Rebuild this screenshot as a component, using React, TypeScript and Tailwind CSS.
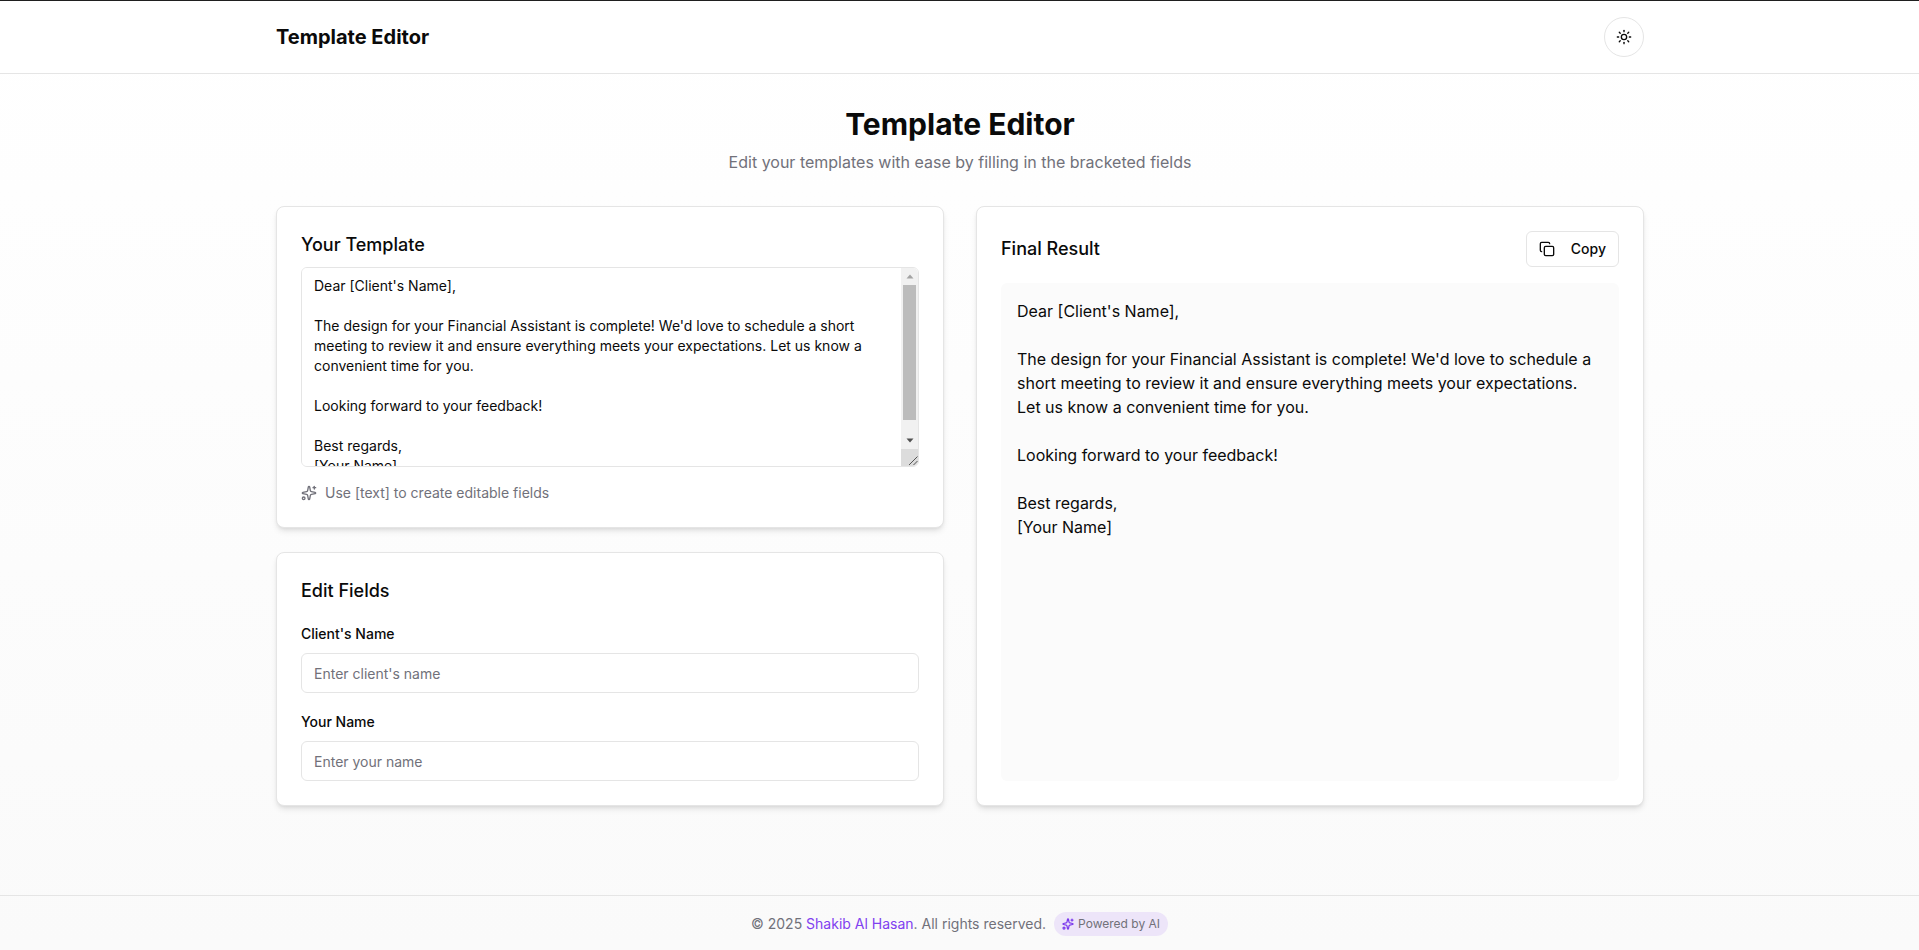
import { Copy, Sparkles, Sun } from "lucide-react";

const template = `Dear [Client's Name],

The design for your Financial Assistant is complete! We'd love to schedule a short meeting to review it and ensure everything meets your expectations. Let us know a convenient time for you.

Looking forward to your feedback!

Best regards,
[Your Name]`;

function Field({ label, placeholder }: { label: string; placeholder: string }) {
  return (
    <div>
      <div className="mb-2 h-6 leading-6">
        <label className="text-sm font-medium text-[#0a0a0a]">{label}</label>
      </div>
      <input
        placeholder={placeholder}
        className="block h-10 w-full rounded-md border border-[#e5e5e5] bg-white px-3 py-2 text-sm text-[#0a0a0a] outline-none placeholder:text-[#71717a]"
      />
    </div>
  );
}

function TextareaScrollbar() {
  return (
    <div className="pointer-events-none absolute top-px right-px bottom-px flex w-[17px] flex-col overflow-hidden rounded-r-[5px] bg-[#f1f1f1]">
      <div className="flex h-[17px] items-center justify-center">
        <svg width="8" height="5" viewBox="0 0 8 5">
          <path d="M0.5 4.500h7L4 0.500z" fill="#a3a3a3" />
        </svg>
      </div>
      <div className="flex-1 px-[2px]">
        <div className="h-[135px] bg-[#bcbcbc]" />
      </div>
      <div className="flex h-[17px] items-center justify-center">
        <svg width="8" height="5" viewBox="0 0 8 5">
          <path d="M0.500 0.500h7L4 4.500z" fill="#505050" />
        </svg>
      </div>
      <div className="h-[17px] bg-[#dcdcdc]">
        <svg width="17" height="17" viewBox="0 0 17 17">
          <path d="M16.500 7.500L8 16M16.500 12L12.500 16" stroke="#555" fill="none" />
        </svg>
      </div>
    </div>
  );
}

export default function App() {
  return (
    <div className="flex min-h-screen flex-col border-t border-t-[#1f1f1f] bg-gradient-to-b from-white to-[#fafafa] font-['Inter',sans-serif] text-[#0a0a0a]">
      <header className="border-b border-[#e5e5e5] bg-white pl-px">
        <div className="mx-auto flex w-full max-w-[1400px] items-center justify-between px-4 py-4">
          <h2 className="text-xl font-bold">Template Editor</h2>
          <button className="flex h-10 w-10 items-center justify-center rounded-full border border-[#e5e5e5] bg-white">
            <Sun className="h-4 w-4" />
          </button>
        </div>
      </header>

      <div className="flex-1 pl-px">
        <main className="mx-auto w-full max-w-[1400px] px-4 py-8">
          <div className="mb-8 text-center">
            <h1 className="mb-2 text-3xl leading-9 font-bold">Template Editor</h1>
            <p className="text-base leading-6 text-[#71717a]">
              Edit your templates with ease by filling in the bracketed fields
            </p>
          </div>

          <div className="grid grid-cols-2 gap-8">
            <div className="flex flex-col gap-6">
              <section className="rounded-lg border border-[#e5e5e5] bg-white p-6 shadow-md">
                <h3 className="mb-2 text-lg font-medium">Your Template</h3>
                <div className="relative">
                  <textarea
                    defaultValue={template}
                    className="block h-[200px] w-full rounded-md border border-[#e5e5e5] bg-white px-3 py-2 text-sm leading-5 text-[#0a0a0a] outline-none"
                  />
                  <TextareaScrollbar />
                </div>
                <div className="mt-4 flex items-center gap-2 text-sm text-[#71717a]">
                  <Sparkles className="h-4 w-4" />
                  <span>Use [text] to create editable fields</span>
                </div>
              </section>

              <section className="rounded-lg border border-[#e5e5e5] bg-white p-6 shadow-md">
                <h3 className="mb-4 text-lg font-medium">Edit Fields</h3>
                <div className="flex flex-col gap-4">
                  <Field label="Client's Name" placeholder="Enter client's name" />
                  <Field label="Your Name" placeholder="Enter your name" />
                </div>
              </section>
            </div>

            <section className="flex flex-col rounded-lg border border-[#e5e5e5] bg-white p-6 shadow-md">
              <div className="mb-4 flex items-center justify-between">
                <h3 className="text-lg font-medium">Final Result</h3>
                <button className="flex h-9 items-center gap-4 rounded-md border border-[#e5e5e5] bg-white px-3 text-sm font-medium">
                  <Copy className="h-4 w-4" />
                  <span>Copy</span>
                </button>
              </div>
              <div className="flex-1 rounded-md bg-[#fbfbfb] p-4 text-base leading-6 whitespace-pre-wrap">
                {template}
              </div>
            </section>
          </div>
        </main>
      </div>

      <footer className="border-t border-[#e5e5e5] pt-4 pb-[14px]">
        <div className="flex items-center justify-center text-sm leading-6 text-[#71717a]">
          <span>
            © 2025 <span className="text-[#8040f0]">Shakib Al Hasan</span>. All rights reserved.
          </span>
          <span className="ml-2 flex h-6 items-center gap-1 rounded-full bg-[#ede5f9] px-2 text-xs">
            <Sparkles className="h-3 w-3 stroke-[2.5] text-[#7c3aed]" />
            Powered by AI
          </span>
        </div>
      </footer>
    </div>
  );
}
